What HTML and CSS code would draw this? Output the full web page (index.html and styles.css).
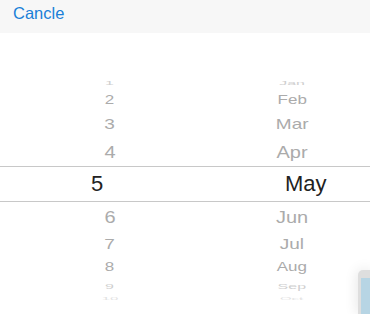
FILE: index.html
```html
<!DOCTYPE html>
<html lang="en">
<head>
  <meta charset="UTF-8" />
  <title>Date Picker</title>
  <meta name="viewport" content="width=device-width, initial-scale=1" />
  <link rel="stylesheet" href="styles.css">
</head>
<body>

  <header class="toolbar">
    <a class="cancel" href="#">Cancle</a>
  </header>

  <div class="picker">
    <div class="row r1"><span class="day">1</span><span class="month">Jan</span></div>
    <div class="row r2"><span class="day">2</span><span class="month">Feb</span></div>
    <div class="row r3"><span class="day">3</span><span class="month">Mar</span></div>
    <div class="row r4"><span class="day">4</span><span class="month">Apr</span></div>
    <div class="row selected"><span class="day">5</span><span class="month">May</span></div>
    <div class="row r6"><span class="day">6</span><span class="month">Jun</span></div>
    <div class="row r7"><span class="day">7</span><span class="month">Jul</span></div>
    <div class="row r8"><span class="day">8</span><span class="month">Aug</span></div>
    <div class="row r9"><span class="day">9</span><span class="month">Sep</span></div>
    <div class="row r10"><span class="day">10</span><span class="month">Oct</span></div>
  </div>

  <!-- peeking card in the corner -->
  <div class="card"><div class="card-screen"></div></div>

</body>
</html>
```

FILE: styles.css
```css
:root {
  --blue: #1a7fd8;
  --line: #c8c8c8;
  --muted: #ababab;
  --faded: #cfcfcf;
  --text: #222;
}

* {
  box-sizing: border-box;
}

body {
  margin: 0;
  background: #fff;
  font-family: 'Liberation Sans', Arial, sans-serif;
  overflow: hidden;
  height: 314px;
  position: relative;
}

.toolbar {
  height: 33px;
  background: #f7f7f7;
  padding: 3px 13px 0;
}

.cancel {
  color: var(--blue);
  text-decoration: none;
  font-size: 16.5px;
  line-height: 20px;
}

.picker {
  padding-top: 40px;
}

.row {
  display: grid;
  grid-template-columns: 220px 144px;
  align-items: center;
  color: var(--muted);
}

.row span {
  justify-self: center;
  display: inline-block;
  font-size: 20px;
  line-height: 1;
}

.r1 { height: 16px; color: var(--faded); }
.r2 { height: 21px; }
.r3 { height: 27px; }
.r4 { height: 29px; }
.r6 { height: 29px; }
.r7 { height: 26px; }
.r8 { height: 20px; }
.r9 { height: 12px; color: var(--faded); }
.r10 { height: 9px; color: #e2e2e2; }

.r1 span { transform: scale(0.8, 0.3); }
.r2 span { transform: scale(0.85, 0.6); }
.r3 span { transform: scale(0.95, 0.72); }
.r4 span { transform: scaleY(0.87); }
.r6 span { transform: scaleY(0.85); }
.r7 span { transform: scale(0.95, 0.75); }
.r8 span { transform: scale(0.85, 0.6); }
.r9 span { transform: scale(0.8, 0.35); }
.r10 span { transform: scale(0.75, 0.15); }

.row.selected {
  height: 36px;
  grid-template-columns: 194px 1fr;
  border-top: 1px solid var(--line);
  border-bottom: 1px solid var(--line);
  color: var(--text);
}

.selected span {
  font-size: 22px;
}

.selected .month {
  justify-self: start;
  padding-left: 91px;
}

.card {
  position: absolute;
  right: 0;
  bottom: 0;
  width: 12px;
  height: 44px;
  background: #dedede;
  border-top-left-radius: 5px;
  box-shadow: 0 0 14px rgba(0, 0, 0, 0.12);
  padding: 8px 0 0 3px;
}

.card-screen {
  height: 100%;
  background: #b7d5e4;
}
```
